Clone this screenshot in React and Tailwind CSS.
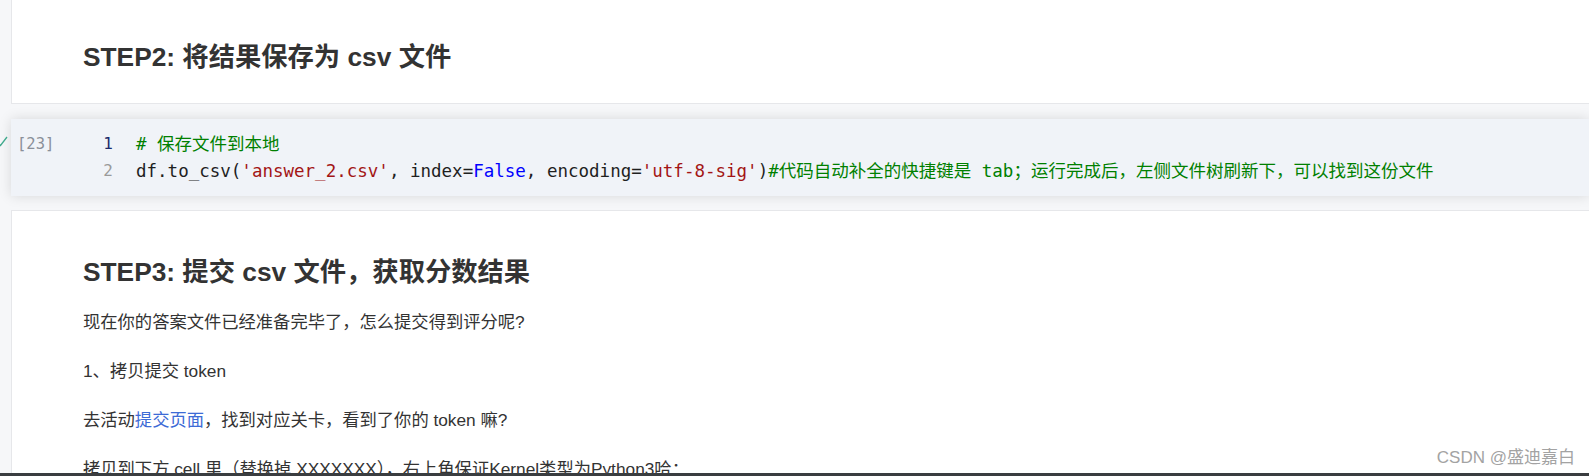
import React from 'react';

const sans = "font-['Liberation_Sans','Noto_Sans_CJK_SC',sans-serif]";

const App = () => {
    return (
        <div className={`relative h-[476px] w-full overflow-hidden bg-[#f6f7f9] ${sans}`}>
            <div className="pl-[11px]">
                {/* STEP2 markdown cell */}
                <div className="h-[104px] bg-white border-l border-b border-[#e6e7ea] pl-[71px] pt-[39px]">
                    <h2 className="text-[26.3px] leading-[36px] font-bold text-[#333]">
                        STEP2: 将结果保存为 csv 文件
                    </h2>
                </div>

                {/* code cell */}
                <div className="relative mt-[15px] h-[77px] bg-[#f0f3f8] shadow-[0_0_12px_rgba(0,0,0,0.13)] flex py-[12px] pl-[6px]">
                    <svg className="absolute left-[-15px] top-[17px]" width="12" height="11" viewBox="0 0 12 11">
                        <path d="M1 6 L4.5 9.5 L11 1" fill="none" stroke="#3fa98c" strokeWidth="1.3" />
                    </svg>
                    <div className="w-[74px] font-['DejaVu_Sans_Mono',monospace] text-[15.5px] leading-[26.7px] text-[#8a8f99]">[23]</div>
                    <div className="w-[22px] text-right font-['DejaVu_Sans_Mono',monospace] text-[16px] leading-[26.7px]">
                        <div className="text-[#1b2a6b]">1</div>
                        <div className="text-[#9a9a9a]">2</div>
                    </div>
                    <div className="ml-[23px] font-['DejaVu_Sans_Mono','Noto_Sans_CJK_SC',monospace] text-[17.5px] leading-[26.7px] whitespace-pre text-[#1f1f1f]">
                        <div className="text-[#008000]"># 保存文件到本地</div>
                        <div>
                            df.to_csv(<span className="text-[#a31515]">'answer_2.csv'</span>, index=<span className="text-[#0000ff]">False</span>, encoding=<span className="text-[#a31515]">'utf-8-sig'</span>)<span className="text-[#008000]">#代码自动补全的快捷键是 tab；运行完成后，左侧文件树刷新下，可以找到这份文件</span>
                        </div>
                    </div>
                </div>

                {/* STEP3 markdown cell */}
                <div className="mt-[14px] bg-white border-l border-t border-[#e6e7ea] pl-[71px] pt-[43px] h-[300px]">
                    <h2 className="text-[26.3px] leading-[36px] font-bold text-[#333]">
                        STEP3: 提交 csv 文件，获取分数结果
                    </h2>
                    <div className="mt-[18px] text-[17.3px] leading-[28px] text-[#333] space-y-[21px]">
                        <p>现在你的答案文件已经准备完毕了，怎么提交得到评分呢?</p>
                        <p>1、拷贝提交 token</p>
                        <p>去活动<span className="text-[#3d6bd6]">提交页面</span>，找到对应关卡，看到了你的 token 嘛?</p>
                        <p>拷贝到下方 cell 里（替换掉 XXXXXXX），右上角保证Kernel类型为Python3哈：</p>
                    </div>
                </div>
            </div>

            <div className="absolute right-[14px] bottom-[8px] text-[17px] leading-[20px] text-[#a3a3a3]">
                CSDN @盛迪嘉白
            </div>
            <div className="absolute left-0 right-0 bottom-0 h-[3px] bg-[#3a3d40]" />
        </div>
    );
};

export default App;
